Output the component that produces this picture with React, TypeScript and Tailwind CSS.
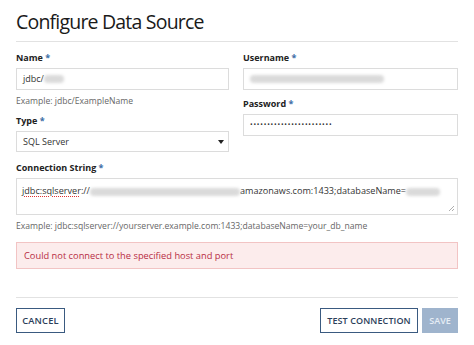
import React from "react";

const font = { fontFamily: '"Open Sans", "Noto Sans", sans-serif' };

const Label = ({ text, className = "" }: { text: string; className?: string }) => (
  <div className={`h-[14px] text-[9px] leading-[14px] font-bold text-[#222] ${className}`}>
    {text} <span className="text-[#3b6ea5]">*</span>
  </div>
);

const Blur = ({ w }: { w: number }) => (
  <span
    className="inline-block h-[8px] align-middle rounded-sm bg-[#dadada] blur-[1.5px]"
    style={{ width: w }}
  />
);

const App = () => {
  return (
    <div className="w-[474px] h-[345px] bg-white px-4 text-[#333]" style={font}>
      <div className="h-[42px] border-b border-[#e2e2e2] pt-[9px]">
        <h1 className="text-[19.5px] leading-[26px] font-medium tracking-[-0.8px] text-[#1a1a1a]">Configure Data Source</h1>
      </div>

      <div className="grid grid-cols-[213px_215px] gap-x-[14px]">
        {/* left column */}
        <div className="flex flex-col">
          <Label text="Name" className="mt-[9px]" />
          <div className="mt-[3px] h-[22px] border border-[#dcdcdc] flex items-center px-[6px] text-[9px]">
            jdbc/<Blur w={20} />
          </div>
          <div className="mt-[4px] h-[14px] leading-[14px] text-[8.6px] text-[#666]">Example: jdbc/ExampleName</div>
          <Label text="Type" className="mt-[6px]" />
          <div className="mt-[3px] h-[21px] border border-[#dcdcdc] flex items-center justify-between pl-[6px] pr-[4px] text-[9px]">
            <span>SQL Server</span>
            <svg width="6" height="4" viewBox="0 0 6 4">
              <path d="M0 0 L6 0 L3 4 Z" fill="#222" />
            </svg>
          </div>
        </div>

        {/* right column */}
        <div className="flex flex-col">
          <Label text="Username" className="mt-[9px]" />
          <div className="mt-[3px] h-[22px] border border-[#dcdcdc] flex items-center px-[6px]">
            <Blur w={134} />
          </div>
          <Label text="Password" className="mt-[7px]" />
          <div className="mt-[3px] h-[22px] border border-[#dcdcdc] flex items-center px-[6px] text-[7px] tracking-[0.8px] text-[#333]">
            ••••••••••••••••••••••••
          </div>
        </div>
      </div>

      <Label text="Connection String" className="mt-[9px]" />
      <div className="relative mt-[3px] h-[37px] border border-[#dcdcdc] px-[5px] pt-[5px] text-[9.1px] leading-[14px] whitespace-nowrap overflow-hidden">
        <span className="underline decoration-dotted decoration-[#d33] underline-offset-2">jdbc:sqlserver</span>://
        <Blur w={150} />
        amazonaws.com:1433;databaseName=<Blur w={34} />
        <svg width="7" height="7" viewBox="0 0 7 7" className="absolute right-[2px] bottom-[2px]">
          <path d="M1 6 L6 1 M4 6 L6 4" stroke="#999" strokeWidth="0.8" />
        </svg>
      </div>
      <div className="mt-[4px] h-[14px] leading-[14px] text-[8.6px] text-[#666]">
        Example: jdbc:sqlserver://yourserver.example.com:1433;databaseName=your_db_name
      </div>

      <div className="mt-[9px] h-[27px] bg-[#fcecec] border border-[#f2c4c4] flex items-center px-[7px] text-[9.3px] text-[#b82c44]">
        Could not connect to the specified host and port
      </div>

      <div className="mt-[28px] border-t border-[#e2e2e2]" />

      <div className="mt-[10px] flex items-center justify-between">
        <button className="h-[25px] w-[49px] border border-[#3a5a80] text-[9.3px] text-[#2c3e5a] font-semibold tracking-[0.2px]">
          CANCEL
        </button>
        <div className="flex gap-[4px]">
          <button className="h-[25px] w-[98px] border border-[#3a5a80] text-[9px] text-[#2c3e5a] font-semibold tracking-[0.1px]">
            TEST CONNECTION
          </button>
          <button className="h-[25px] w-[36px] bg-[#9fb4cd] text-[9px] text-[#e6edf5] font-semibold">SAVE</button>
        </div>
      </div>
    </div>
  );
};

export default App;
